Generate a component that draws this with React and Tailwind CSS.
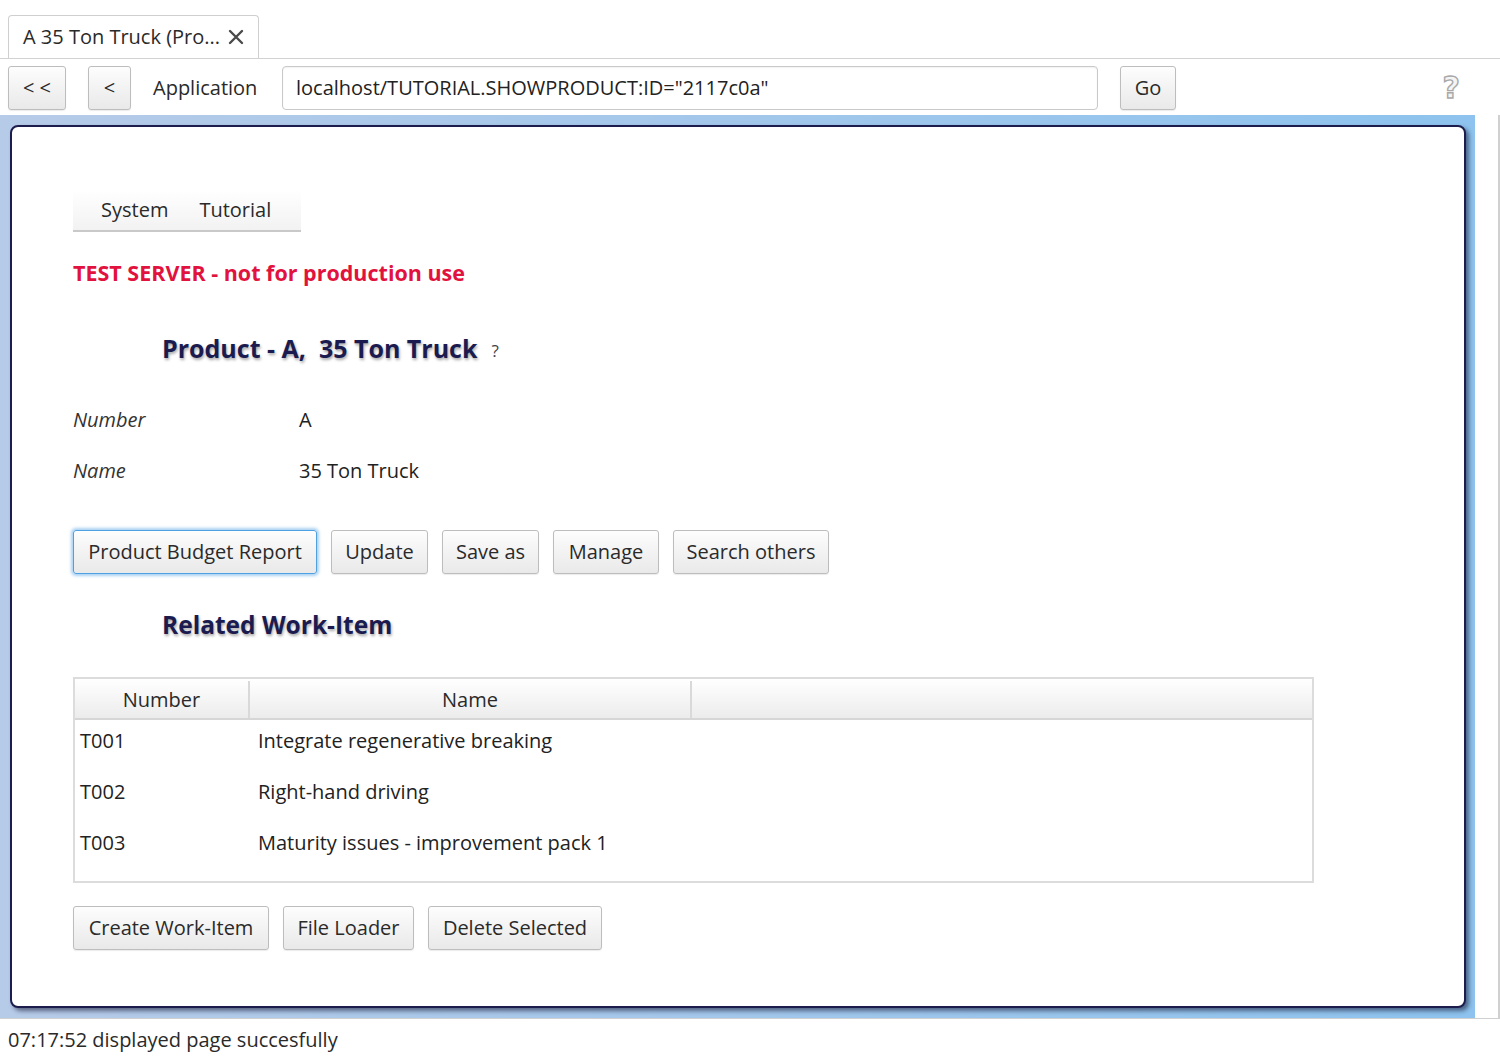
import React from "react";

const font = { fontFamily: '"Open Sans", "Noto Sans", "Liberation Sans", sans-serif' };

function Btn({ w, children, focus }) {
  return (
    <button
      className={
        "h-[44px] shrink-0 rounded-[3px] border text-[20px] text-[#2a2a2a] flex items-center justify-center bg-gradient-to-b from-[#fdfdfd] to-[#e9e9e9] " +
        (focus
          ? "border-[#4da0e2] shadow-[0_0_3px_2px_rgba(90,165,230,0.5)]"
          : "border-[#bdbdbd] shadow-[0_1px_1px_rgba(0,0,0,0.08)]")
      }
      style={{ width: w }}
    >
      {children}
    </button>
  );
}

export default function App() {
  return (
    <div className="w-[1500px] h-[1058px] flex flex-col bg-white overflow-hidden" style={font}>
      {/* Tab bar */}
      <div className="h-[59px] shrink-0 flex items-end pl-[8px] border-b border-[#d2d2d2]">
        <div className="w-[251px] h-[43px] border border-b-0 border-[#cfcfcf] rounded-t-[4px] flex items-center pl-[14px] pr-[14px] justify-between bg-white">
          <span className="text-[20px] text-[#2a2a2a] whitespace-nowrap">A 35 Ton Truck (Pro...</span>
          <svg width="16" height="16" viewBox="0 0 16 16" className="shrink-0">
            <path d="M2 2 L14 14 M14 2 L2 14" stroke="#4a4a4a" strokeWidth="2.4" strokeLinecap="round" />
          </svg>
        </div>
      </div>

      {/* Toolbar */}
      <div className="h-[56px] shrink-0 flex items-center pl-[8px] pr-[40px] pt-[1px]">
        <Btn w={58}>{"< <"}</Btn>
        <div className="w-[22px]" />
        <Btn w={43}>{"<"}</Btn>
        <span className="ml-[22px] w-[129px] text-[20px] text-[#2a2a2a]">Application</span>
        <div className="w-[816px] h-[44px] border border-[#c9c9c9] rounded-[4px] flex items-center pl-[13px] text-[20px] text-[#222] shadow-[inset_0_1px_2px_rgba(0,0,0,0.06)]">
          localhost/TUTORIAL.SHOWPRODUCT:ID="2117c0a"
        </div>
        <div className="w-[22px]" />
        <Btn w={56}>Go</Btn>
        <div className="flex-1" />
        <span className="text-[30px] leading-none font-bold text-[#f4f4f4] [-webkit-text-stroke:1.4px_#a8a8a8]" style={{ fontFamily: '"DejaVu Sans", sans-serif' }}>
          ?
        </span>
      </div>

      {/* Main */}
      <div className="h-[903px] shrink-0 flex">
        <div className="w-[1475px] shrink-0 bg-gradient-to-r from-[#b6cbe8] to-[#8dc3ee] pt-[10px] pb-[10px] pl-[10px] pr-[9px] flex">
          <div className="flex-1 bg-white border-2 border-[#1d1d4d] rounded-[8px] shadow-[3px_3px_4px_rgba(20,20,50,0.55)] pl-[61px] flex flex-col">
            {/* menu */}
            <div className="mt-[63px] w-[228px] h-[42px] bg-gradient-to-b from-white to-[#f2f2f2] border-b-2 border-[#c9c9c9] flex items-center pl-[28px] gap-[31px] text-[20px] text-[#2a2a2a]">
              <span>System</span>
              <span>Tutorial</span>
            </div>
            <div className="mt-[21px] h-[40px] flex items-center text-[21.5px] font-bold text-[#e2123e]">
              TEST SERVER - not for production use
            </div>
            <div className="mt-[36px] h-[40px] flex items-center ml-[89px]">
              <span className="text-[25px] font-bold text-[#1b1b4f] [text-shadow:1px_2px_3px_rgba(0,0,0,0.35)] whitespace-pre">
                Product - A,  35 Ton Truck
              </span>
              <span className="ml-[14px] mt-[4px] text-[17px] text-[#444]">?</span>
            </div>
            <div className="mt-[31px] h-[40px] flex items-center text-[20px]">
              <span className="w-[226px] italic text-[#333]">Number</span>
              <span className="text-[#222]">A</span>
            </div>
            <div className="mt-[11px] h-[40px] flex items-center text-[20px]">
              <span className="w-[226px] italic text-[#333]">Name</span>
              <span className="text-[#222]">35 Ton Truck</span>
            </div>
            <div className="mt-[39px] flex gap-[14px]">
              <Btn w={244} focus>Product Budget Report</Btn>
              <Btn w={97}>Update</Btn>
              <Btn w={97}>Save as</Btn>
              <Btn w={106}>Manage</Btn>
              <Btn w={156}>Search others</Btn>
            </div>
            <div className="mt-[31px] h-[40px] flex items-center ml-[89px]">
              <span className="text-[24.5px] font-bold text-[#1b1b4f] [text-shadow:1px_2px_3px_rgba(0,0,0,0.35)]">
                Related Work-Item
              </span>
            </div>
            {/* table */}
            <div className="mt-[32px] w-[1241px] h-[206px] border-2 border-[#dcdcdc] flex flex-col">
              <div className="h-[41px] shrink-0 flex bg-gradient-to-b from-white to-[#ececec] border-b-2 border-[#d6d6d6] text-[20px] text-[#2a2a2a] pt-[2px]">
                <div className="w-[175px] border-r-2 border-[#d9d9d9] flex items-center justify-center">Number</div>
                <div className="w-[442px] border-r-2 border-[#d9d9d9] flex items-center justify-center">Name</div>
                <div className="flex-1" />
              </div>
              <div className="flex flex-col mt-[-5px]">
                {[
                  ["T001", "Integrate regenerative breaking"],
                  ["T002", "Right-hand driving"],
                  ["T003", "Maturity issues - improvement pack 1"],
                ].map(([n, nm]) => (
                  <div key={n} className="h-[51px] shrink-0 flex items-center text-[20px] text-[#222]">
                    <div className="w-[177px] pl-[5px]">{n}</div>
                    <div className="pl-[6px]">{nm}</div>
                  </div>
                ))}
              </div>
            </div>
            <div className="mt-[23px] flex gap-[14px]">
              <Btn w={196}>Create Work-Item</Btn>
              <Btn w={131}>File Loader</Btn>
              <Btn w={174}>Delete Selected</Btn>
            </div>
          </div>
        </div>
        <div className="flex-1 bg-white border-r-2 border-[#d0d0d0]" />
      </div>

      {/* status */}
      <div className="flex-1 border-t border-[#d0d0d0] flex items-center pl-[8px] pt-[3px] text-[20px] text-[#2a2a2a]">
        07:17:52 displayed page succesfully
      </div>
    </div>
  );
}
